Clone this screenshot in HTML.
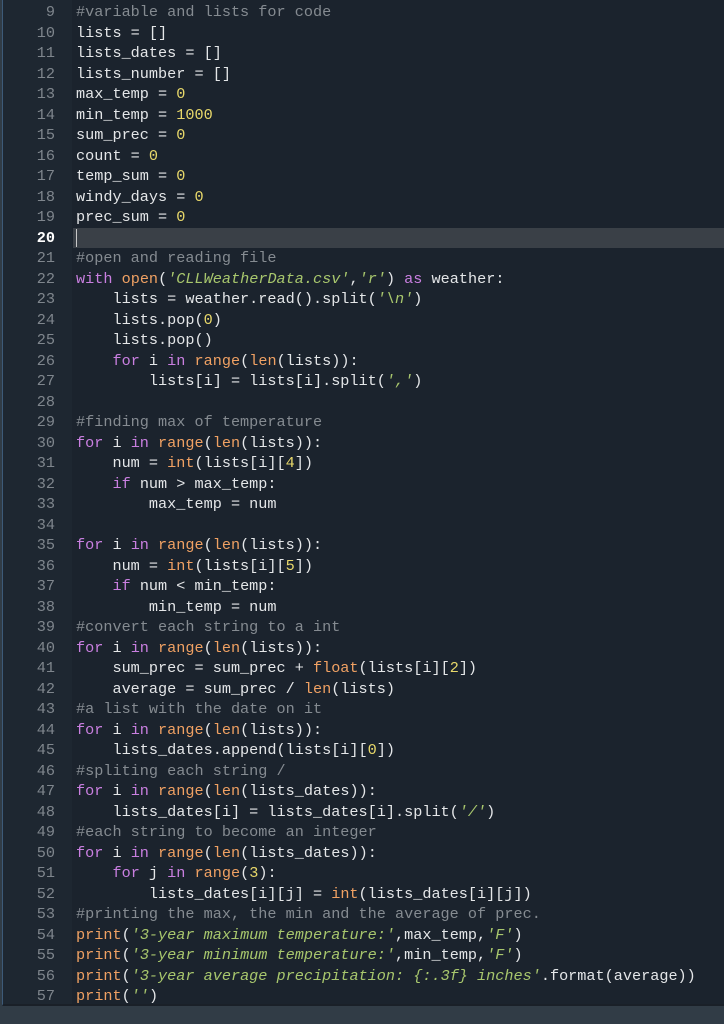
<!DOCTYPE html>
<html><head><meta charset="utf-8"><style>
html,body{margin:0;padding:0;}
body{width:724px;height:1024px;background:#313c46;position:relative;overflow:hidden;}
#frame{position:absolute;left:2px;top:0;width:722px;height:1006px;background:#1b232d;border-left:1px solid #3d5a78;border-bottom:2px solid #1a2028;box-sizing:border-box;}
#gutter{position:absolute;left:3px;top:0;width:69px;height:1004px;background:#1e2731;}
#hl{position:absolute;left:73px;top:228px;width:651px;height:20px;background:#3a4047;}
#caret{position:absolute;left:76px;top:229px;width:1px;height:18px;background:#c8c8c8;}
.ln{position:absolute;left:0;width:55px;text-align:right;font:15.2px "Liberation Mono",monospace;color:#7f868d;line-height:20.5px;}
.code{position:absolute;left:76px;font:15.2px "Liberation Mono",monospace;color:#e4e6e8;line-height:20.5px;white-space:pre;}
.c{color:#858b91}.k{color:#c97fe0}.b{color:#f0a163}.n{color:#e8d86a}.s{color:#a8c76d;font-style:italic}
</style></head><body>
<div id="frame"></div><div id="gutter"></div><div id="hl"></div><div id="caret"></div>
<div class="ln" style="top:2px">9<br>10<br>11<br>12<br>13<br>14<br>15<br>16<br>17<br>18<br>19<br><b style="color:#fff">20</b><br>21<br>22<br>23<br>24<br>25<br>26<br>27<br>28<br>29<br>30<br>31<br>32<br>33<br>34<br>35<br>36<br>37<br>38<br>39<br>40<br>41<br>42<br>43<br>44<br>45<br>46<br>47<br>48<br>49<br>50<br>51<br>52<br>53<br>54<br>55<br>56<br>57</div>
<div class="code" style="top:2px"><span class="c">#variable and lists for code</span>
lists = []
lists_dates = []
lists_number = []
max_temp = <span class="n">0</span>
min_temp = <span class="n">1000</span>
sum_prec = <span class="n">0</span>
count = <span class="n">0</span>
temp_sum = <span class="n">0</span>
windy_days = <span class="n">0</span>
prec_sum = <span class="n">0</span>

<span class="c">#open and reading file</span>
<span class="k">with</span> <span class="b">open</span>(<span class="s">'CLLWeatherData.csv'</span>,<span class="s">'r'</span>) <span class="k">as</span> weather:
    lists = weather.read().split(<span class="s">'\n'</span>)
    lists.pop(<span class="n">0</span>)
    lists.pop()
    <span class="k">for</span> i <span class="k">in</span> <span class="b">range</span>(<span class="b">len</span>(lists)):
        lists[i] = lists[i].split(<span class="s">','</span>)

<span class="c">#finding max of temperature</span>
<span class="k">for</span> i <span class="k">in</span> <span class="b">range</span>(<span class="b">len</span>(lists)):
    num = <span class="b">int</span>(lists[i][<span class="n">4</span>])
    <span class="k">if</span> num &gt; max_temp:
        max_temp = num

<span class="k">for</span> i <span class="k">in</span> <span class="b">range</span>(<span class="b">len</span>(lists)):
    num = <span class="b">int</span>(lists[i][<span class="n">5</span>])
    <span class="k">if</span> num &lt; min_temp:
        min_temp = num
<span class="c">#convert each string to a int</span>
<span class="k">for</span> i <span class="k">in</span> <span class="b">range</span>(<span class="b">len</span>(lists)):
    sum_prec = sum_prec + <span class="b">float</span>(lists[i][<span class="n">2</span>])
    average = sum_prec / <span class="b">len</span>(lists)
<span class="c">#a list with the date on it</span>
<span class="k">for</span> i <span class="k">in</span> <span class="b">range</span>(<span class="b">len</span>(lists)):
    lists_dates.append(lists[i][<span class="n">0</span>])
<span class="c">#spliting each string /</span>
<span class="k">for</span> i <span class="k">in</span> <span class="b">range</span>(<span class="b">len</span>(lists_dates)):
    lists_dates[i] = lists_dates[i].split(<span class="s">'/'</span>)
<span class="c">#each string to become an integer</span>
<span class="k">for</span> i <span class="k">in</span> <span class="b">range</span>(<span class="b">len</span>(lists_dates)):
    <span class="k">for</span> j <span class="k">in</span> <span class="b">range</span>(<span class="n">3</span>):
        lists_dates[i][j] = <span class="b">int</span>(lists_dates[i][j])
<span class="c">#printing the max, the min and the average of prec.</span>
<span class="b">print</span>(<span class="s">'3-year maximum temperature:'</span>,max_temp,<span class="s">'F'</span>)
<span class="b">print</span>(<span class="s">'3-year minimum temperature:'</span>,min_temp,<span class="s">'F'</span>)
<span class="b">print</span>(<span class="s">'3-year average precipitation: {:.3f} inches'</span>.format(average))
<span class="b">print</span>(<span class="s">''</span>)</div>
</body></html>
